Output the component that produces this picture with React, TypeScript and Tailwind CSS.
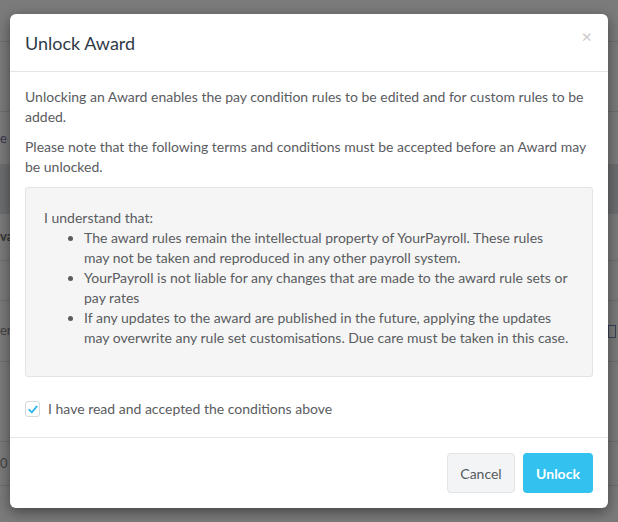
import React from "react";

const font = { fontFamily: "Lato, 'Open Sans', Arial, sans-serif" };

function Backdrop() {
  return (
    <div className="flex flex-col w-full h-full bg-[#7b7b7b] text-[13px] text-[#3c3c3c]">
      <div className="h-[42px] border-b border-[#6e6e6e]" />
      <div className="h-[70px] border-b border-[#6e6e6e]" />
      <div className="h-[52px] flex items-center text-[#3a3550]">
        <span className="leading-none">e t</span>
      </div>
      <div className="h-[50px] bg-[#6d6e70]" />
      <div className="h-[47px] flex items-center border-b border-[#6e6e6e] font-bold text-[#333]">
        <span>va</span>
      </div>
      <div className="h-[40px] border-b border-[#6e6e6e]" />
      <div className="h-[61px] flex items-center justify-between border-b border-[#6e6e6e]">
        <span className="text-[#444]">er</span>
        <span className="w-[8px] h-[13px] border border-[#3a3f55] mr-[2px]" />
      </div>
      <div className="h-[80px] border-b border-[#6e6e6e]" />
      <div className="h-[44px] flex items-center border-b border-[#6e6e6e]">
        <span className="text-[#444]">0</span>
      </div>
      <div className="flex-1" />
    </div>
  );
}

export default function App() {
  return (
    <div className="relative w-[618px] h-[522px] overflow-hidden" style={font}>
      <Backdrop />
      <div className="absolute inset-0 pt-[14px] pl-[10px]">
        <div className="w-[598px] h-[494px] bg-white rounded-[6px] shadow-[0_4px_14px_rgba(0,0,0,0.45)] flex flex-col">
          <div className="h-[58px] flex items-start justify-between border-b border-[#e5e5e5] pl-[15px] pr-[16px]">
            <h1 className="mt-[17px] text-[18px] leading-[24px] text-[#2f3b47] font-normal">Unlock Award</h1>
            <span className="mt-[12px] text-[#c8c8c8] text-[18px] leading-[20px]">×</span>
          </div>
          <div className="flex-1 flex flex-col pl-[15px] pr-[15px] pt-[15px] text-[14px] leading-[20px] text-[#5a5c5f] whitespace-nowrap">
            <p>
              Unlocking an Award enables the pay condition rules to be edited and for custom rules to be
              <br />
              added.
            </p>
            <p className="mt-[10px]">
              Please note that the following terms and conditions must be accepted before an Award may
              <br />
              be unlocked.
            </p>
            <div className="mt-[10px] h-[190px] bg-[#f5f5f5] border border-[#e3e3e3] rounded-[3px] pl-[18px] pt-[20px]">
              <p>I understand that:</p>
              <ul className="list-disc pl-[40px]">
                <li>
                  The award rules remain the intellectual property of YourPayroll. These rules
                  <br />
                  may not be taken and reproduced in any other payroll system.
                </li>
                <li>
                  YourPayroll is not liable for any changes that are made to the award rule sets or
                  <br />
                  pay rates
                </li>
                <li>
                  If any updates to the award are published in the future, applying the updates
                  <br />
                  may overwrite any rule set customisations. Due care must be taken in this case.
                </li>
              </ul>
            </div>
            <label className="flex items-center mt-[22px]">
              <span className="w-[15px] h-[16px] border border-[#d5d8dc] rounded-[3px] bg-white flex items-center justify-center">
                <svg width="10" height="9" viewBox="0 0 10 9">
                  <path d="M1.2 4.8 L3.8 7.4 L8.8 1.4" fill="none" stroke="#2fb8ea" strokeWidth="1.8" strokeLinecap="round" strokeLinejoin="round" />
                </svg>
              </span>
              <span className="ml-[8px]">I have read and accepted the conditions above</span>
            </label>
          </div>
          <div className="h-[71px] border-t border-[#e5e5e5] flex items-start justify-end gap-[8px] pt-[15px] pr-[15px]">
            <button className="w-[68px] h-[40px] rounded-[4px] bg-[#f3f4f6] border border-[#e1e3e6] text-[#555a60] text-[14px]">
              Cancel
            </button>
            <button className="w-[70px] h-[40px] rounded-[4px] bg-[#33c1f0] text-white text-[14px] font-bold">
              Unlock
            </button>
          </div>
        </div>
      </div>
    </div>
  );
}
